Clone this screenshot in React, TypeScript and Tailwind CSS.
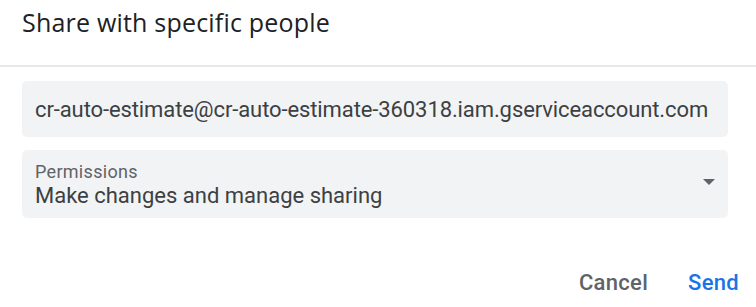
export default function App() {
  return (
    <div className="w-[756px] h-[307px] bg-white overflow-hidden flex flex-col" style={{ fontFamily: "Roboto, Arial, sans-serif" }}>
      {/* Header */}
      <div className="h-[67px] pl-[22px] pt-[6px] border-b-2 border-[#e8e8e8]">
        <h2 className="text-[25px] leading-[32px] text-[#202124] tracking-[0.2px]" style={{ fontFamily: "'Open Sans', sans-serif" }}>
          Share with specific people
        </h2>
      </div>

      <div className="pl-[22px] pr-[28px] pt-[14px] flex flex-col gap-[13px]">
        {/* Email chip */}
        <div className="h-[56px] rounded-[5px] bg-[#f1f3f4] flex items-center px-[13px]">
          <span className="text-[22px] text-[#3c4043] tracking-[-0.1px]">
            cr-auto-estimate@cr-auto-estimate-360318.iam.gserviceaccount.com
          </span>
        </div>

        {/* Permissions select */}
        <div className="h-[68px] rounded-[5px] bg-[#f1f3f4] flex items-center pl-[13px] pr-[13px]">
          <div className="flex-1 flex flex-col pt-[1px]">
            <span className="text-[18px] leading-[21px] text-[#5f6368] tracking-[0.3px]">Permissions</span>
            <span className="text-[22px] leading-[27px] text-[#3c4043]">Make changes and manage sharing</span>
          </div>
          <svg width="12" height="6" viewBox="0 0 12 6" className="mb-[4px]">
            <path d="M0 0h12L6 6z" fill="#5f6368" />
          </svg>
        </div>
      </div>

      {/* Footer */}
      <div className="flex-1 flex items-end justify-end gap-[40px] pr-[17px] pb-[8px]">
        <button className="text-[22px] font-medium text-[#5f6368] tracking-[0.3px]">Cancel</button>
        <button className="text-[22px] font-medium text-[#1a73e8] tracking-[0.3px]">Send</button>
      </div>
    </div>
  );
}
